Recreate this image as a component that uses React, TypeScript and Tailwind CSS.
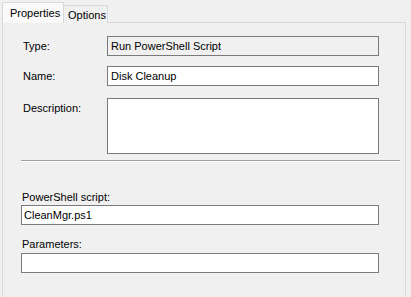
export default function App() {
  return (
    <div className="w-[411px] h-[297px] overflow-hidden bg-[#f0f0f0] pt-[2px] pl-[2px] text-[11px] leading-[13px] text-black font-['Liberation_Sans',Arial,sans-serif]">
      {/* tab headers */}
      <div className="flex items-end h-[21px]">
        <div className="relative z-10 h-[21px] w-[62px] border border-b-0 border-[#d9d9d9] bg-[#f9f9f9] pl-[7px] pt-[4px]">
          Properties
        </div>
        <div className="h-[18px] w-[44px] border border-b-0 border-l-0 border-[#d9d9d9] bg-[#f0f0f0] pl-[4px] pt-[3px]">
          Options
        </div>
      </div>

      {/* tab page */}
      <div className="-mt-px w-[404px] h-[300px] border border-[#d9d9d9] bg-[#f0f0f0] flex flex-col pt-[13px]">
        <div className="flex items-center h-[20px]">
          <span className="ml-[20px] w-[84px]">Type:</span>
          <div className="w-[272px] h-[20px] border border-[#7a7a7a] bg-[#f0f0f0] pl-[3px] flex items-center">
            Run PowerShell Script
          </div>
        </div>

        <div className="mt-[10px] flex items-center h-[20px]">
          <span className="ml-[20px] w-[84px]">Name:</span>
          <div className="w-[272px] h-[20px] border border-[#7a7a7a] bg-white pl-[3px] flex items-center">
            Disk Cleanup
          </div>
        </div>

        <div className="mt-[12px] flex items-start">
          <span className="ml-[20px] w-[84px] pt-[4px]">Description:</span>
          <div className="w-[272px] h-[56px] border border-[#7a7a7a] bg-white" />
        </div>

        <div className="mt-[6px] ml-[18px] w-[379px] h-[2px] border-t border-[#a0a0a0] border-b border-b-white" />

        <span className="mt-[29px] ml-[19px]">PowerShell script:</span>
        <div className="mt-[1px] ml-[18px] w-[358px] h-[20px] border border-[#7a7a7a] bg-white pl-[2px] flex items-center">
          CleanMgr.ps1
        </div>

        <span className="mt-[13px] ml-[19px]">Parameters:</span>
        <div className="mt-[2px] ml-[18px] w-[358px] h-[20px] border border-[#7a7a7a] bg-white" />
      </div>
    </div>
  );
}
